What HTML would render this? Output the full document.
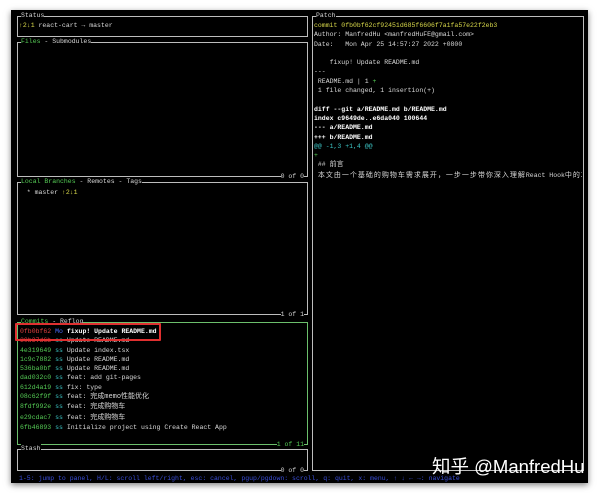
<html><head><style>
body{margin:0;background:#fff;width:600px;height:493px;position:relative;overflow:hidden;font-family:"Liberation Mono","Noto Sans CJK SC",monospace;font-size:6.5px;color:#d8d8d8}
#t{position:absolute;left:11px;top:10px;width:577px;height:473px;background:#000;box-shadow:0 2px 6px rgba(0,0,0,.5)}
.b{position:absolute;border:1px solid #bdbdbd}
.g{border-color:#6cbf6c}
.tt{position:absolute;top:-6px;left:3px;background:#000;line-height:10px;white-space:pre}
.ft{position:absolute;bottom:-6px;right:3px;background:#000;line-height:10px}
.l{position:absolute;white-space:pre;line-height:9.3px}
.y{color:#d8d84a}.gr{color:#55cc55}.w{color:#fff;font-weight:bold}.c{color:#3cc4c4}.bl{color:#4a6cff}.r{color:#e04040}
.cj{font-size:7px;line-height:9.3px}
</style></head><body>
<div id="t"></div>
<div class="b" style="left:17px;top:16px;width:289px;height:19px"><span class="tt">Status</span></div>
<div class="l" style="left:19px;top:21px"><span class="y">↑2↓1</span> react-cart → master</div>
<div class="b" style="left:17px;top:42px;width:289px;height:133px"><span class="tt"><span class="gr">Files</span> - Submodules</span><span class="ft">0 of 0</span></div>
<div class="b" style="left:17px;top:182px;width:289px;height:131px"><span class="tt"><span class="gr">Local Branches</span> - Remotes - Tags</span><span class="ft">1 of 1</span></div>
<div class="l" style="left:19px;top:188px">  * master <span class="y">↑2↓1</span></div>
<div class="b g" style="left:17px;top:322px;width:289px;height:121px"><span class="tt"><span class="gr">Commits</span> - Reflog</span><span class="ft gr">1 of 11</span></div>
<div class="l" style="left:20px;top:327px"><span class="r">0fb0bf62</span> <span class="bl">Mo</span> <span class="w">fixup! Update README.md</span>
<span class="r">30b37d6b</span> <span class="c">ss</span> Update README.md
<span class="gr">4e319649</span> <span class="c">ss</span> Update index.tsx
<span class="gr">1c9c7882</span> <span class="c">ss</span> Update README.md
<span class="gr">536ba0bf</span> <span class="c">ss</span> Update README.md
<span class="gr">dad032c0</span> <span class="c">ss</span> feat: add git-pages
<span class="gr">612d4a19</span> <span class="c">ss</span> fix: type
<span class="gr">08c62f9f</span> <span class="c">ss</span> feat: <span class="cj">完成memo性能优化</span>
<span class="gr">8fdf992e</span> <span class="c">ss</span> feat: <span class="cj">完成购物车</span>
<span class="gr">e29cdac7</span> <span class="c">ss</span> feat: <span class="cj">完成购物车</span>
<span class="gr">6fb46893</span> <span class="c">ss</span> Initialize project using Create React App</div>
<div style="position:absolute;left:15px;top:323px;width:142px;height:14px;border:2px solid #e03030;border-radius:1px"></div>
<div class="b" style="left:17px;top:449px;width:289px;height:20px"><span class="tt">Stash</span><span class="ft">0 of 0</span></div>
<div class="b" style="left:312px;top:16px;width:270px;height:453px"><span class="tt">Patch</span></div>
<div class="l" style="left:314px;top:21px;width:268px;overflow:hidden"><span class="y">commit 0fb0bf62cf92451d685f6606f7a1fa57e22f2eb3</span>
Author: ManfredHu &lt;manfredHuFE@gmail.com&gt;
Date:   Mon Apr 25 14:57:27 2022 +0800

    fixup! Update README.md
---
 README.md | 1 <span class="gr">+</span>
 1 file changed, 1 insertion(+)

<span class="w">diff --git a/README.md b/README.md
index c9649de..e6da040 100644
--- a/README.md
+++ b/README.md</span>
<span class="c">@@ -1,3 +1,4 @@</span>
<span class="gr">+</span>
 ## <span class="cj">前言</span>
 <span class="cj" style="letter-spacing:1px">本文由一个基础的购物车需求展开，一步一步带你深入理解</span>React Hook<span class="cj" style="letter-spacing:1px">中的坑和优化</span></div>
<div class="l" style="left:19px;top:474px;color:#3a4ed8">1-5: jump to panel, H/L: scroll left/right, esc: cancel, pgup/pgdown: scroll, q: quit, x: menu, ↑ ↓ ← →: navigate</div>
<div style="position:absolute;left:432px;top:456px;font-family:'Liberation Sans','Noto Sans CJK SC',sans-serif;font-size:18.5px;color:#fff;line-height:22px;white-space:nowrap">知乎 @ManfredHu</div>
</body></html>
